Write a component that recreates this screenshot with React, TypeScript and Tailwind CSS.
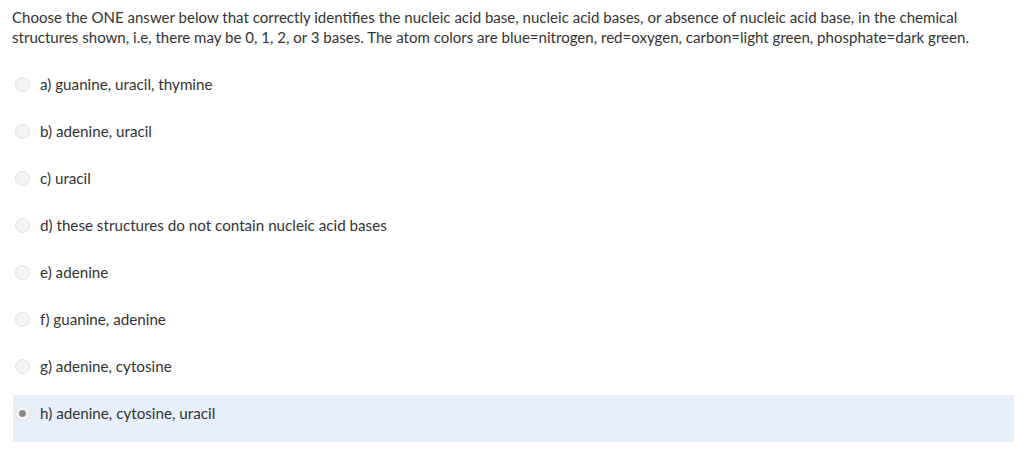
import React from "react";

const options = [
  "a) guanine, uracil, thymine",
  "b) adenine, uracil",
  "c) uracil",
  "d) these structures do not contain nucleic acid bases",
  "e) adenine",
  "f) guanine, adenine",
  "g) adenine, cytosine",
  "h) adenine, cytosine, uracil",
];

export default function App() {
  return (
    <div
      className="w-[1024px] h-[457px] bg-white text-[#333333] text-[15.2px] leading-[20px] pl-[12px] pr-[10px] pt-[7px]"
      style={{ fontFamily: "Lato, 'Open Sans', sans-serif" }}
    >
      <p className="whitespace-nowrap text-[15.05px]">
        Choose the ONE answer below that correctly identifies the nucleic acid base, nucleic acid bases, or absence of
        nucleic acid base, in the chemical
        <br />
        structures shown, i.e, there may be 0, 1, 2, or 3 bases. The atom colors are blue=nitrogen, red=oxygen,
        carbon=light green, phosphate=dark green.
      </p>
      <div className="mt-[19px] flex flex-col">
        {options.map((o, i) => {
          const selected = i === options.length - 1;
          return (
            <div
              key={i}
              className={`h-[47px] ml-[1px] w-[1001px] flex items-start pt-[8px] pl-[2px] ${selected ? "bg-[#e7f0fa]" : ""}`}
            >
              <span className="w-[15px] h-[15px] mt-[3px] rounded-full border border-[#e2e2e2] bg-[#f5f5f5] flex items-center justify-center shrink-0">
                {selected && <span className="w-[7px] h-[7px] rounded-full bg-[#8a8a8a]" />}
              </span>
              <span className="ml-[10px]">{o}</span>
            </div>
          );
        })}
      </div>
    </div>
  );
}
